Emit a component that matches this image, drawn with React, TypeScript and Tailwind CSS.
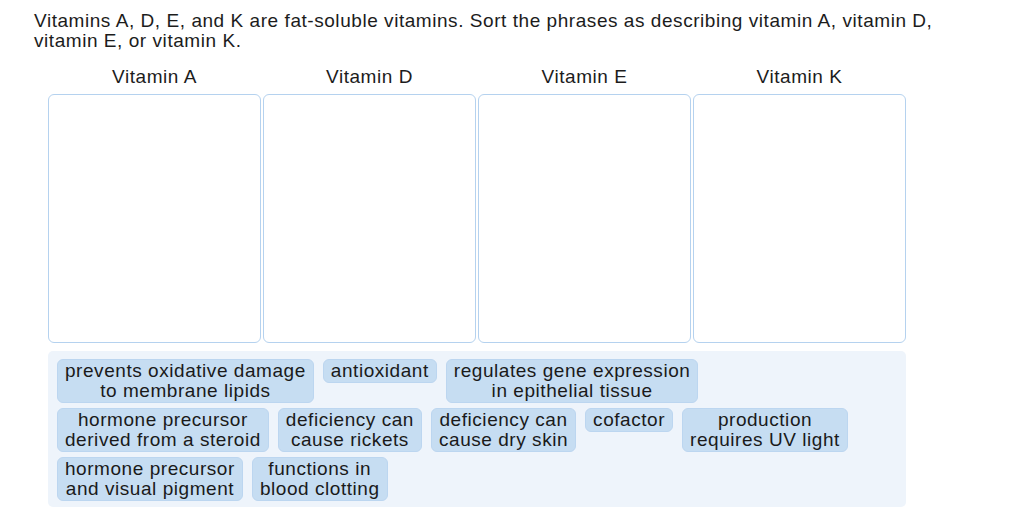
const columns = ["Vitamin A", "Vitamin D", "Vitamin E", "Vitamin K"];

// phrases waiting in the answer bank, each line kept as written
const phrases: string[][] = [
  ["prevents oxidative damage", "to membrane lipids"],
  ["antioxidant"],
  ["regulates gene expression", "in epithelial tissue"],
  ["hormone precursor", "derived from a steroid"],
  ["deficiency can", "cause rickets"],
  ["deficiency can", "cause dry skin"],
  ["cofactor"],
  ["production", "requires UV light"],
  ["hormone precursor", "and visual pigment"],
  ["functions in", "blood clotting"],
];

export default function App() {
  return (
    <div className="h-[512px] w-[1024px] bg-white font-['Liberation_Sans',Arial,sans-serif] text-[19px] leading-[20px] tracking-[0.55px] text-[#1c1c1c]">
      <div className="pl-[34px] pt-[11px]">
        <p className="whitespace-nowrap">
          Vitamins A, D, E, and K are fat-soluble vitamins. Sort the phrases as describing vitamin A, vitamin D,
          <br />
          vitamin E, or vitamin K.
        </p>
      </div>

      <div className="ml-[48px] mt-[16px] w-[858px]">
        <div className="grid grid-cols-4 gap-[2px]">
          {columns.map((name) => (
            <div key={name} className="flex flex-col">
              <div className="h-[27px] text-center">{name}</div>
              <div className="h-[249px] rounded-[6px] border border-[#b5d2ef] bg-white" />
            </div>
          ))}
        </div>

        <div className="mt-[8px] flex h-[156px] flex-wrap content-start items-start gap-x-[9px] gap-y-[5px] rounded-[5px] bg-[#eef4fb] px-[9px] pt-[8px]">
          {phrases.map((lines, i) => (
            <div
              key={i}
              className="whitespace-nowrap rounded-[6px] border border-[#bcd6f0] bg-[#c6ddf2] px-[7px] py-[1px] text-center text-[#1a1a1a]"
            >
              {lines.map((line, j) => (
                <div key={j}>{line}</div>
              ))}
            </div>
          ))}
        </div>
      </div>
    </div>
  );
}
